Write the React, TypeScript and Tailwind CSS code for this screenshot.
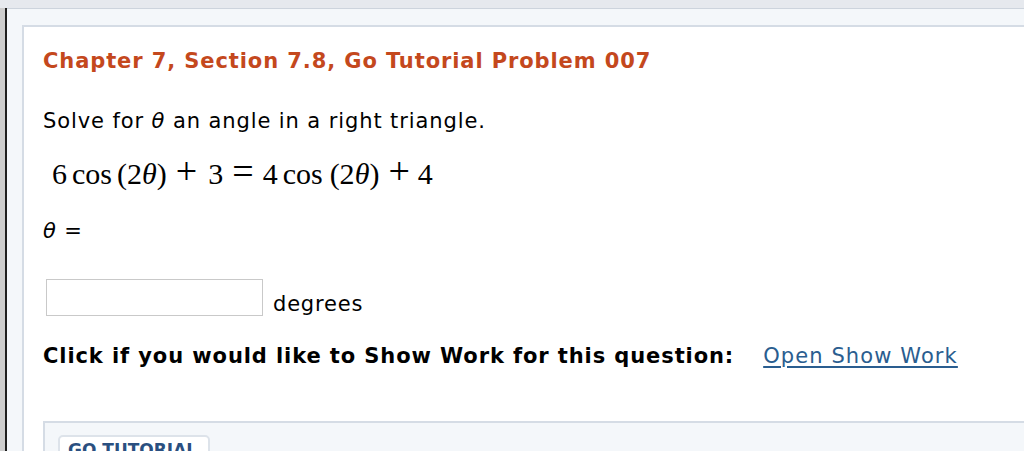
import React from "react";

export default function App() {
  const sans = { fontFamily: '"DejaVu Sans", Verdana, sans-serif' };
  return (
    <div className="w-[1024px] h-[451px] overflow-hidden bg-[#e6e9ee] flex flex-col" style={sans}>
      <div className="h-[8px] shrink-0" />
      <div className="flex flex-1 min-h-0">
        <div className="w-[5px] bg-[#cdcdcd] shrink-0" />
        <div className="w-[2px] bg-[#1e1e1e] shrink-0" />
        <div className="flex-1 bg-[#f4f7fa] border-t border-[#cdd4dd] pt-[16px] pl-[15px] flex flex-col min-h-0">
          <div className="flex-1 bg-white border-t-2 border-l-2 border-[#d5dce5] pl-[19px] pt-[20px] flex flex-col">
            <h1 className="text-[21px] leading-[28px] font-bold text-[#c4481d] tracking-[0.9px]">
              Chapter 7, Section 7.8, Go Tutorial Problem 007
            </h1>
            <p className="mt-[33px] text-[21px] leading-[26px] text-black tracking-[0.9px]">
              Solve for <i className="italic">θ</i> an angle in a right triangle.
            </p>
            <div
              className="mt-[20px] ml-[9px] text-[30px] leading-[34px] text-black whitespace-nowrap"
              style={{ fontFamily: '"Liberation Serif", "Times New Roman", serif' }}
            >
              <span>6</span>
              <span className="ml-[5px]">cos</span>
              <span className="ml-[5px]">(2<i>θ</i>)</span>
              <span className="ml-[9px] text-[38px] leading-[34px]">+</span>
              <span className="ml-[11px]">3</span>
              <span className="ml-[9px] text-[38px] leading-[34px]">=</span>
              <span className="ml-[9px]">4</span>
              <span className="ml-[5px]">cos</span>
              <span className="ml-[7px]">(2<i>θ</i>)</span>
              <span className="ml-[9px] text-[38px] leading-[34px]">+</span>
              <span className="ml-[8px]">4</span>
            </div>
            <p className="mt-[27px] text-[21px] leading-[26px] text-black tracking-[0.9px]">
              <i>θ</i> =
            </p>
            <div className="mt-[35px] ml-[3px] flex items-end">
              <div className="w-[217px] h-[37px] border border-[#c9c9c9] bg-white shrink-0" />
              <span className="ml-[10px] text-[21px] leading-[24px] text-black tracking-[0.8px]">degrees</span>
            </div>
            <div className="mt-[27px] flex items-baseline">
              <span className="text-[21px] leading-[26px] font-bold text-black tracking-[0.9px]">
                Click if you would like to Show Work for this question:
              </span>
              <a className="ml-[29px] text-[21px] leading-[26px] text-[#2a5d8f] underline underline-offset-[3px] tracking-[1.1px]">
                Open Show Work
              </a>
            </div>
            <div className="mt-[52px] flex-1 bg-[#f4f7fa] border-t-2 border-l-2 border-[#d5dce5] pl-[13px] pt-[12px]">
              <button className="h-[34px] w-[152px] bg-white border-2 border-[#dde3ea] rounded-[5px] text-[17px] leading-[26px] font-bold text-[#2a4f80] text-left pl-[8px] pt-0 flex items-start whitespace-nowrap overflow-hidden">
                GO TUTORIAL
              </button>
            </div>
          </div>
        </div>
      </div>
    </div>
  );
}
